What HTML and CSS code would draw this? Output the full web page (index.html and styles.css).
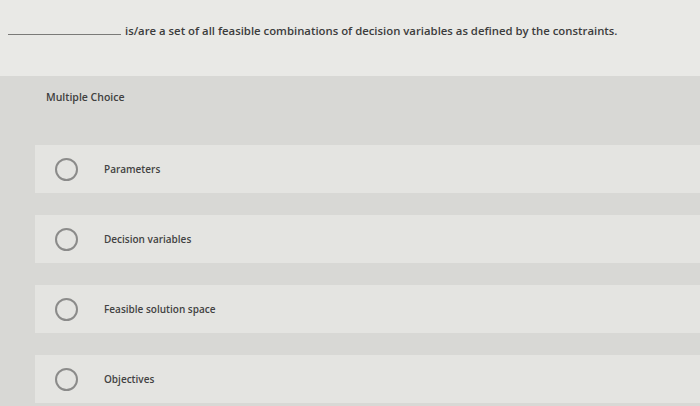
FILE: index.html
```html
<!DOCTYPE html>
<html>
<head>
<meta charset="utf-8">
<link rel="stylesheet" href="styles.css">
</head>
<body>
<div class="page">
  <div class="question">
    <span class="blank"></span><span class="qtext">is/are a set of all feasible combinations of decision variables as defined by the constraints.</span>
  </div>
  <div class="panel">
    <div class="label">Multiple Choice</div>
    <div class="options">
      <div class="option"><span class="radio"></span><span class="opt-text">Parameters</span></div>
      <div class="option"><span class="radio"></span><span class="opt-text">Decision variables</span></div>
      <div class="option"><span class="radio"></span><span class="opt-text">Feasible solution space</span></div>
      <div class="option"><span class="radio"></span><span class="opt-text">Objectives</span></div>
    </div>
  </div>
</div>
</body>
</html>
```
FILE: styles.css
```css
html, body {
  margin: 0;
  padding: 0;
  background: #e9e9e6;
  font-family: "Open Sans", Lato, "Liberation Sans", sans-serif;
  overflow: hidden;
}
.page {
  width: 700px;
  height: 406px;
}
.question {
  height: 76px;
  padding: 23px 0 0 8px;
  box-sizing: border-box;
  display: flex;
  align-items: baseline;
}
.blank {
  display: inline-block;
  width: 113px;
  border-bottom: 1px solid #7a7a78;
  height: 8px;
  margin-right: 4px;
  margin-bottom: 3px;
  flex: none;
}
.qtext {
  font-size: 11.35px;
  font-weight: 600;
  color: #3c3c3c;
  white-space: nowrap;
}
.panel {
  background: #d8d8d5;
  padding: 16px 0 0 35px;
  height: 330px;
  box-sizing: border-box;
}
.label {
  font-size: 10.5px;
  font-weight: 600;
  color: #404040;
  margin-left: 11px;
  height: 14px;
  line-height: 10px;
}
.options {
  display: flex;
  flex-direction: column;
  gap: 22px;
  margin-top: 39px;
}
.option {
  background: #e4e4e1;
  height: 48px;
  display: flex;
  align-items: center;
}
.radio {
  width: 19px;
  height: 19px;
  border: 2px solid #8b8b8a;
  border-radius: 50%;
  margin-left: 20px;
  flex: none;
}
.opt-text {
  font-size: 10px;
  font-weight: 600;
  color: #424242;
  margin-left: 26px;
}
```
